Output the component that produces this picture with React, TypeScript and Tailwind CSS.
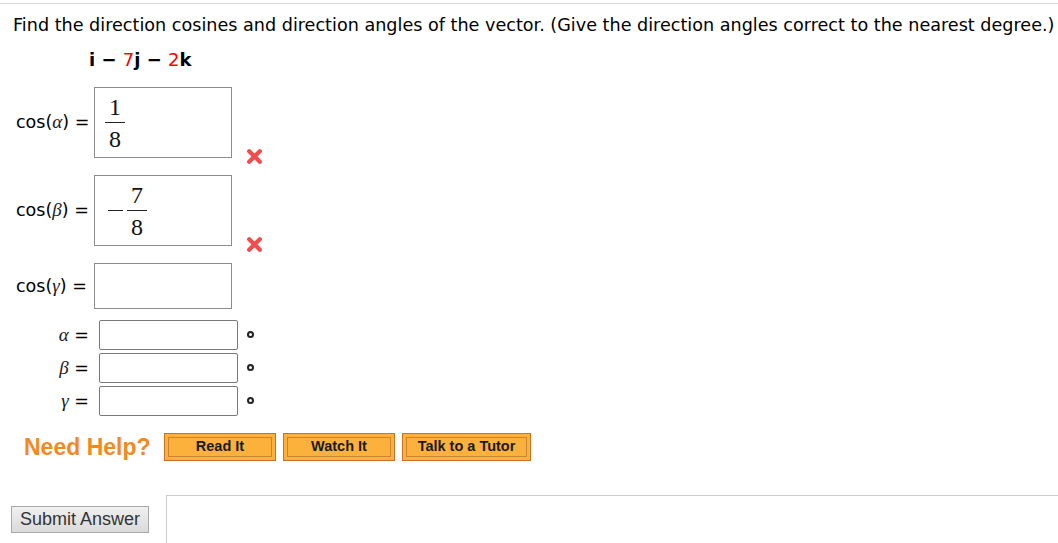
import React from 'react';

const verdana = { fontFamily: '"DejaVu Sans", Verdana, sans-serif' };

const Greek: React.FC<{ ch: string }> = ({ ch }) => (
  <span className="italic text-[19px] text-[#1a1a1a]" style={{ fontFamily: '"Liberation Serif", serif' }}>
    {ch}
  </span>
);

const Frac: React.FC<{ num: string; den: string }> = ({ num, den }) => (
  <span className="inline-flex flex-col items-center leading-none">
    <span className="px-[4px] pb-[3px]">{num}</span>
    <span className="w-full border-t border-[#222]" />
    <span className="px-[4px] pt-[4px]">{den}</span>
  </span>
);

const XMark = () => (
  <svg width="17" height="17" viewBox="0 0 16 16" className="shrink-0">
    <path d="M3 3 L13 13 M13 3 L3 13" stroke="#f24c4c" strokeWidth="4" strokeLinecap="round" />
  </svg>
);

const Degree = () => (
  <span className="inline-block w-[7px] h-[7px] rounded-full border-2 border-[#222] mt-[6px]" />
);

const CosRow: React.FC<{ greek: string; children?: React.ReactNode; wrong?: boolean; tall?: boolean }> = ({
  greek,
  children,
  wrong,
  tall,
}) => (
  <div className="flex items-stretch">
    <div className="w-[78px] flex items-center text-[17.5px] text-black whitespace-nowrap" style={verdana}>
      <span>
        cos(<Greek ch={greek} />) =
      </span>
    </div>
    <div
      className={`w-[138px] ${tall ? 'h-[71px]' : 'h-[46px]'} border border-[#8c8c8c] flex items-center pl-[10px] text-[24px] text-[#111]`}
      style={{ fontFamily: '"Liberation Serif", serif' }}
    >
      {children}
    </div>
    {wrong && (
      <div className="flex items-end ml-[14px] -mb-[7px]">
        <XMark />
      </div>
    )}
  </div>
);

const AngleRow: React.FC<{ greek: string }> = ({ greek }) => (
  <div className="flex items-start">
    <div className="w-[90px] h-[30px] flex items-center justify-end pr-[1px] text-[17.5px]" style={verdana}>
      <Greek ch={greek} />
      <span>&nbsp;=</span>
    </div>
    <div className="ml-[9px] w-[139px] h-[30px] border border-[#7a7a7a] rounded-[2px]" />
    <div className="ml-[9px]">
      <Degree />
    </div>
  </div>
);

const HelpButton: React.FC<{ label: string; w: string }> = ({ label, w }) => (
  <div className={`${w} h-[28px] border border-[#c8731f] bg-[#fbb13c] p-[3px]`}>
    <div
      className="h-full border border-[#c98630] flex items-center justify-center text-[14.5px] font-bold text-[#1a1a1a]"
      style={{ fontFamily: '"Liberation Sans", Arial, sans-serif' }}
    >
      {label}
    </div>
  </div>
);

export default function App() {
  return (
    <div className="w-[1058px] h-[543px] overflow-hidden bg-white relative">
      <div className="h-[3px]" />
      <div className="border-t border-[#dcdcdc]" />
      <div className="pl-[13px] pt-[11px] text-[17.6px] text-black whitespace-nowrap leading-[20px]" style={verdana}>
        Find the direction cosines and direction angles of the vector. (Give the direction angles correct to the nearest degree.)
      </div>
      <div className="pl-[89px] pt-[15px] text-[18px] font-bold text-black leading-[20px]" style={verdana}>
        i − <span className="text-[#ff0000] font-normal">7</span>j − <span className="text-[#ff0000] font-normal">2</span>k
      </div>

      <div className="pl-[16px] pt-[17px] flex flex-col gap-[17px]">
        <CosRow greek="α" wrong tall>
          <Frac num="1" den="8" />
        </CosRow>
        <CosRow greek="β" wrong tall>
          <span className="flex items-center pl-[3px]">
            <span className="w-[15px] border-t border-[#222] mr-[4px]" />
            <Frac num="7" den="8" />
          </span>
        </CosRow>
        <CosRow greek="γ" />
      </div>

      <div className="pt-[11px] flex flex-col gap-[3px]">
        <AngleRow greek="α" />
        <AngleRow greek="β" />
        <AngleRow greek="γ" />
      </div>

      <div className="flex items-center pl-[24px] pt-[14px]">
        <span
          className="w-[140px] text-[23px] font-bold text-[#f28a1e] whitespace-nowrap"
          style={{ fontFamily: '"Liberation Sans", Arial, sans-serif' }}
        >
          Need Help?
        </span>
        <div className="flex gap-[7px]">
          <HelpButton label="Read It" w="w-[112px]" />
          <HelpButton label="Watch It" w="w-[112px]" />
          <HelpButton label="Talk to a Tutor" w="w-[129px]" />
        </div>
      </div>

      <div className="flex items-start pt-[30px]">
        <button
          className="ml-[11px] mt-[11px] w-[138px] h-[27px] border border-[#a9a9a9] bg-gradient-to-b from-[#f0f0f0] to-[#dadada] text-[18px] text-[#333] leading-none"
          style={{ fontFamily: '"Liberation Sans", Arial, sans-serif' }}
        >
          Submit Answer
        </button>
        <div className="ml-[17px] flex-1 h-[60px] border-t border-l border-[#cccccc]" />
      </div>
    </div>
  );
}
